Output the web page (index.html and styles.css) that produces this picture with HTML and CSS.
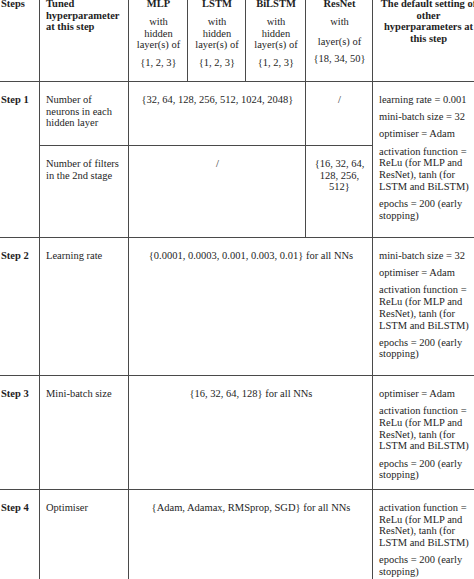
FILE: index.html
```html
<!DOCTYPE html>
<html>
<head>
<meta charset="utf-8">
<link rel="stylesheet" href="styles.css">
</head>
<body>
<table class="grid">
  <colgroup>
    <col class="c-step">
    <col class="c-tuned">
    <col class="c-mlp">
    <col class="c-lstm">
    <col class="c-bilstm">
    <col class="c-resnet">
    <col class="c-default">
  </colgroup>
  <thead>
    <tr class="r-head">
      <th class="h-left">Steps</th>
      <th class="h-left">Tuned<br>hyperparameter<br>at this step</th>
      <th class="h-mid"><p class="title">MLP</p><p>with<br>hidden<br>layer(s) of</p><p>{1, 2, 3}</p></th>
      <th class="h-mid"><p class="title">LSTM</p><p>with<br>hidden<br>layer(s) of</p><p>{1, 2, 3}</p></th>
      <th class="h-mid"><p class="title">BiLSTM</p><p>with<br>hidden<br>layer(s) of</p><p>{1, 2, 3}</p></th>
      <th class="h-mid"><p class="title">ResNet</p><p class="loose">with</p><p>layer(s) of</p><p>{18, 34, 50}</p></th>
      <th class="h-right">The default setting of<br>other<br>hyperparameters at<br>this step</th>
    </tr>
  </thead>
  <tbody>
    <tr class="r-1a">
      <td class="step" rowspan="2">Step 1</td>
      <td>Number of neurons in each hidden layer</td>
      <td class="val" colspan="3">{32, 64, 128, 256, 512, 1024, 2048}</td>
      <td class="val">/</td>
      <td class="defaults" rowspan="2">
        <p>learning rate = 0.001</p>
        <p>mini-batch size = 32</p>
        <p>optimiser = Adam</p>
        <p>activation function = ReLu (for MLP and ResNet), tanh (for LSTM and BiLSTM)</p>
        <p>epochs = 200 (early stopping)</p>
      </td>
    </tr>
    <tr class="r-1b">
      <td>Number of filters in the 2nd stage</td>
      <td class="val" colspan="3">/</td>
      <td class="val">{16, 32, 64, 128, 256, 512}</td>
    </tr>
    <tr class="r-2">
      <td class="step">Step 2</td>
      <td>Learning rate</td>
      <td class="val" colspan="4">{0.0001, 0.0003, 0.001, 0.003, 0.01} for all NNs</td>
      <td class="defaults">
        <p>mini-batch size = 32</p>
        <p>optimiser = Adam</p>
        <p>activation function = ReLu (for MLP and ResNet), tanh (for LSTM and BiLSTM)</p>
        <p>epochs = 200 (early stopping)</p>
      </td>
    </tr>
    <tr class="r-3">
      <td class="step">Step 3</td>
      <td>Mini-batch size</td>
      <td class="val" colspan="4">{16, 32, 64, 128} for all NNs</td>
      <td class="defaults">
        <p>optimiser = Adam</p>
        <p>activation function = ReLu (for MLP and ResNet), tanh (for LSTM and BiLSTM)</p>
        <p>epochs = 200 (early stopping)</p>
      </td>
    </tr>
    <tr class="r-4">
      <td class="step">Step 4</td>
      <td>Optimiser</td>
      <td class="val" colspan="4">{Adam, Adamax, RMSprop, SGD} for all NNs</td>
      <td class="defaults">
        <p>activation function = ReLu (for MLP and ResNet), tanh (for LSTM and BiLSTM)</p>
        <p>epochs = 200 (early stopping)</p>
      </td>
    </tr>
  </tbody>
</table>
</body>
</html>
```

FILE: styles.css
```css
html, body {
  margin: 0;
  padding: 0;
  background: #ffffff;
  overflow: hidden;
}

body {
  font-family: "Liberation Serif", "Times New Roman", serif;
  font-size: 10.5px;
  line-height: 11.7px;
  color: #1e1e1e;
}

.grid {
  border-collapse: collapse;
  table-layout: fixed;
  width: 489px;
  margin: -12px 0 0 -6px;
}

.c-step { width: 45px; }
.c-tuned { width: 89px; }
.c-mlp { width: 59px; }
.c-lstm { width: 58px; }
.c-bilstm { width: 60px; }
.c-resnet { width: 67px; }
.c-default { width: 111px; }

.grid th,
.grid td {
  border: 1px solid #4a4a4a;
  vertical-align: top;
  padding: 12px 5px 0 6px;
}

.grid th {
  padding-top: 9px;
  font-weight: normal;
}

.grid p {
  margin: 0 0 5.5px;
}

.h-left {
  text-align: left;
  font-weight: bold !important;
}

.h-mid {
  text-align: center;
}

.h-mid .title {
  font-weight: bold;
  margin-bottom: 6.3px;
}

.h-mid .loose {
  margin-bottom: 8.5px;
}

.h-right {
  text-align: center;
  font-weight: bold !important;
  white-space: nowrap;
}

.r-head { height: 93px; }
.r-1a { height: 64px; }
.r-1b { height: 92px; }
.r-2 { height: 138px; }
.r-3 { height: 114px; }
.r-4 { height: 120px; }

.step {
  font-weight: bold;
}

.val {
  text-align: center;
}

.defaults {
  padding-right: 4px;
}
```
